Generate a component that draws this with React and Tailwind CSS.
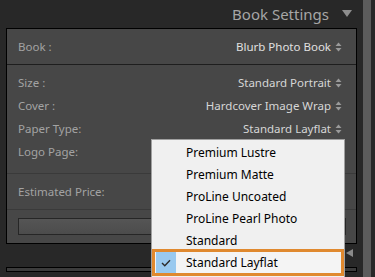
import React from 'react'

const font = { fontFamily: '"Segoe UI", "Noto Sans", "Open Sans", sans-serif' }

function UpDown() {
  return (
    <svg width="7" height="10" viewBox="0 0 7 10" className="ml-[4px] shrink-0">
      <path d="M0.5 4 L3.5 0.5 L6.5 4 Z" fill="#9a9a9a" />
      <path d="M0.5 6 L3.5 9.5 L6.5 6 Z" fill="#9a9a9a" />
    </svg>
  )
}

function Row({ label, value, className = '' }) {
  return (
    <div className={`flex items-center justify-between h-[23px] ${className}`}>
      <span className="text-[#a3a3a3]">{label}</span>
      {value && (
        <span className="flex items-center text-[#d6d6d6]">
          {value}
          <UpDown />
        </span>
      )}
    </div>
  )
}

const paperTypes = ['Premium Lustre', 'Premium Matte', 'ProLine Uncoated', 'ProLine Pearl Photo', 'Standard']

export default function App() {
  return (
    <div className="relative w-[375px] h-[277px] overflow-hidden bg-[#282828] text-[11.5px]" style={font}>
      <div className="flex h-full">
        <div className="flex flex-col w-[357px]">
          {/* header */}
          <div className="flex items-center justify-end h-[28px] pr-[5px]">
            <span className="text-[15px] text-[#a6a6a6]">Book Settings</span>
            <svg width="10" height="8" viewBox="0 0 10 8" className="ml-[13px]">
              <path d="M0 0 L10 0 L5 7 Z" fill="#8e8e8e" />
            </svg>
          </div>

          {/* panel */}
          <div className="ml-[6px] border border-black bg-[#474747]">
            <div className="flex items-center justify-between h-[35px] pl-[11px] pr-[14px]">
              <span className="text-[#a3a3a3]">Book :</span>
              <span className="flex items-center text-[#e0e0e0]">
                Blurb Photo Book
                <UpDown />
              </span>
            </div>
            <div className="h-[1px] bg-[#1e1e1e]" />
            <div className="pl-[11px] pr-[14px] pt-[6px] pb-[10px] border-b border-[#3a3a3a]">
              <Row label="Size :" value="Standard Portrait" />
              <Row label="Cover :" value="Hardcover Image Wrap" />
              <Row label="Paper Type:" value="Standard Layflat" />
              <Row label="Logo Page:" />
            </div>
            <div className="flex items-center h-[36px] pl-[11px] border-b border-[#3a3a3a]">
              <span className="text-[#a3a3a3]">Estimated Price:</span>
            </div>
            <div className="h-[33px] pl-[11px] pr-[10px] pt-[8px]">
              <div className="h-[17px] border border-[#262626] bg-gradient-to-b from-[#555555] to-[#4c4c4c] flex items-center justify-center">
                <span className="text-[#8aa0a0] text-[11px]">Layout</span>
              </div>
            </div>
          </div>

          {/* lower dark area */}
          <div className="flex-1 flex flex-col justify-end pb-[5px]">
            <div className="flex justify-end pr-[4px] mb-[10px]">
              <svg width="7" height="8" viewBox="0 0 7 8">
                <path d="M7 0 L7 8 L0 4 Z" fill="#8a8a8a" />
              </svg>
            </div>
            <div className="ml-[6px] h-[5px] border border-black bg-[#3c3c3c]" />
          </div>
        </div>

        {/* scrollbar */}
        <div className="flex-1 flex pl-[6px] pr-[4px]">
          <div className="w-[8px] h-full bg-[#5c5c5c]" />
        </div>
      </div>

      {/* dropdown menu */}
      <div className="absolute left-[151px] top-[139px] w-[194px] h-[150px] bg-[#f0f0f0] border border-[#a0a0a0] pt-[2px] text-[12px] text-black">
        {paperTypes.map((p) => (
          <div key={p} className="flex items-center h-[22px] pl-[34px]">
            {p}
          </div>
        ))}
        <div className="flex items-stretch h-[27px] -mt-[3px] border-[3px] border-[#e0892f] bg-[#f4f4f4]">
          <div className="w-[20px] ml-[1px] bg-[#99c9ef] flex items-center justify-center">
            <svg width="10" height="8" viewBox="0 0 10 8">
              <path d="M1 4 L3.8 6.8 L9 1.2" fill="none" stroke="#2b2b2b" strokeWidth="1.4" />
            </svg>
          </div>
          <div className="flex items-center pl-[10px]">Standard Layflat</div>
        </div>
      </div>
    </div>
  )
}
